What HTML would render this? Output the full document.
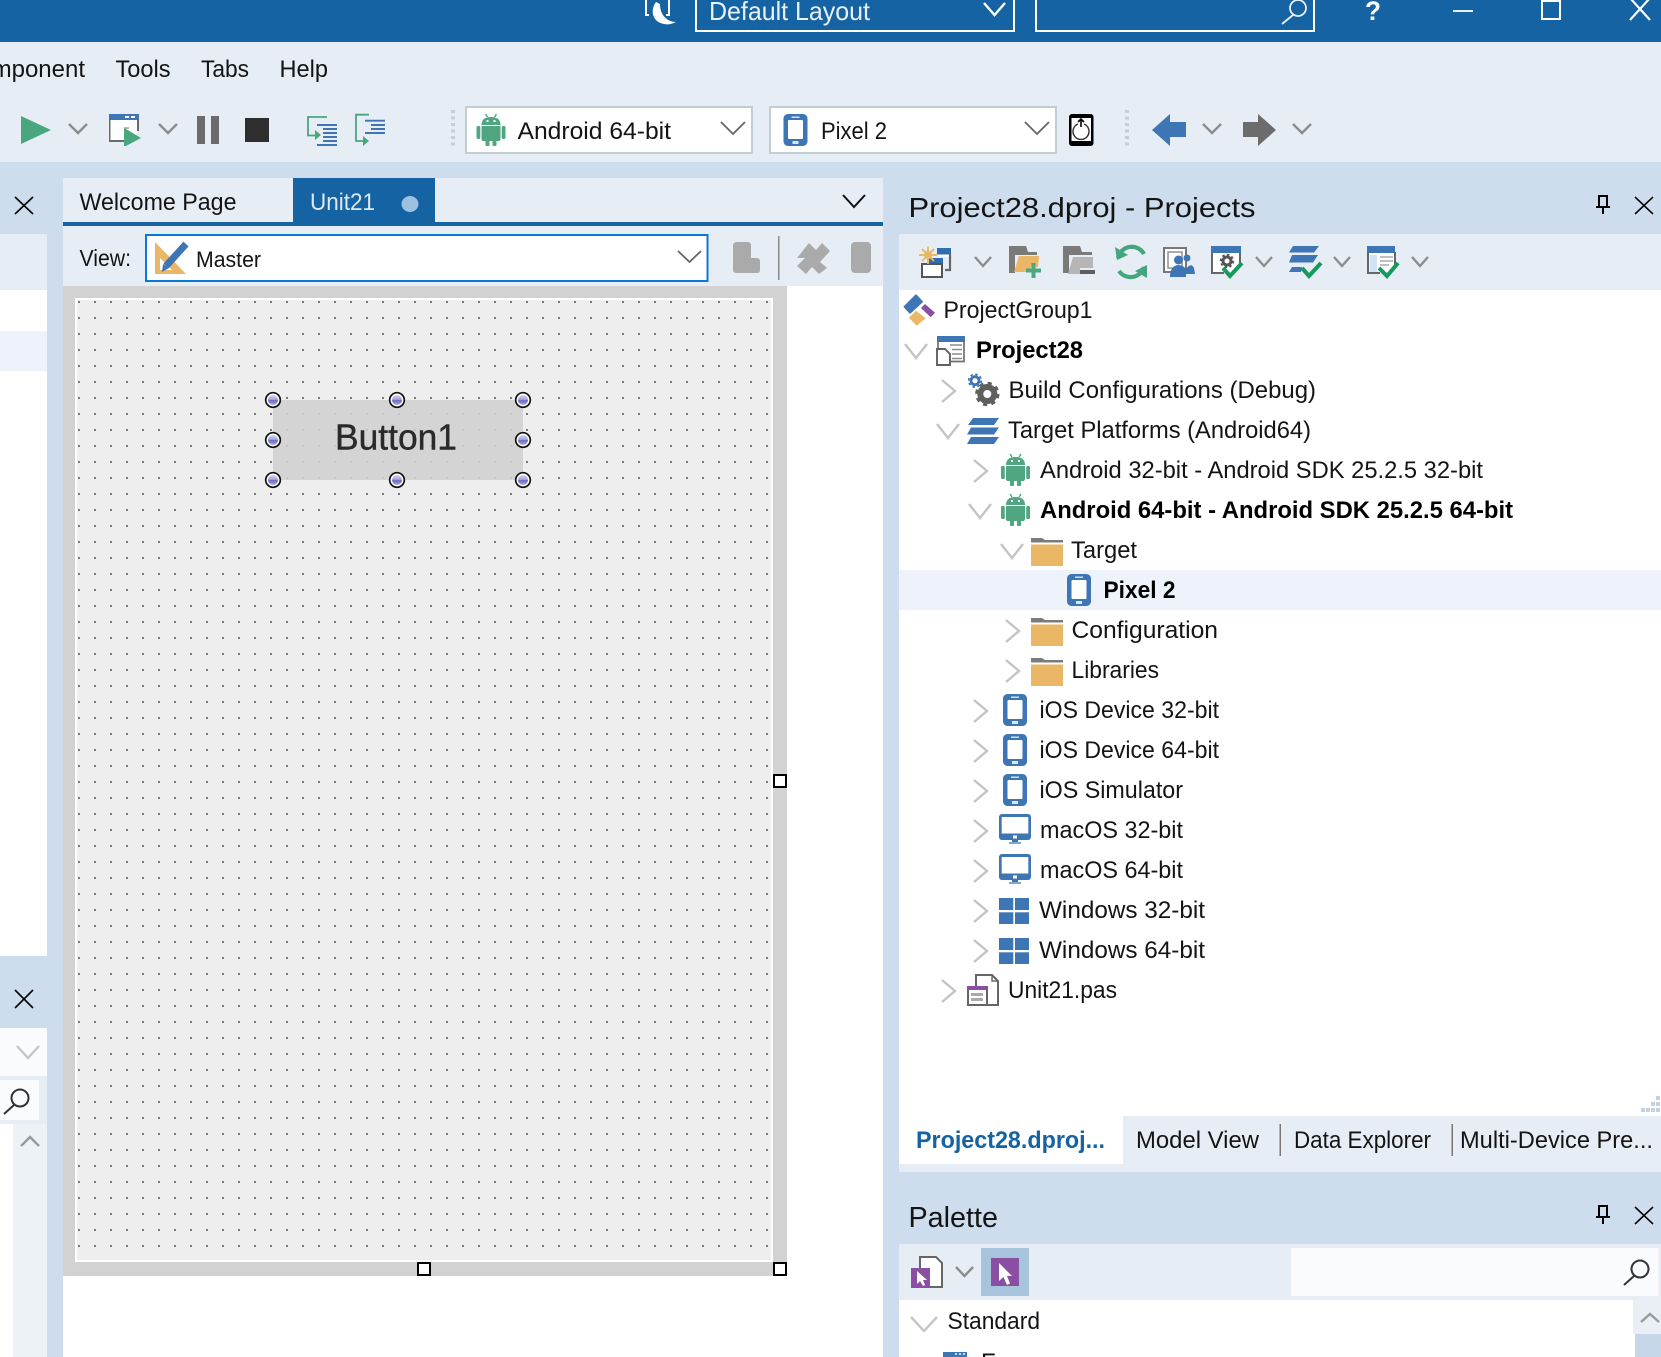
<!DOCTYPE html>
<html>
<head>
<meta charset="utf-8">
<title>Project28</title>
<style>
html,body{margin:0;padding:0;background:#fff;width:1661px;height:1357px;overflow:hidden}
svg{display:block}
text{font-family:"Liberation Sans",sans-serif;font-size:24px;fill:#141414;white-space:pre}
.b{font-weight:bold;fill:#000}
.c{fill:none;stroke:#c4c4c4;stroke-width:2.4}
.t{fill:none;stroke:#8c8c8c;stroke-width:2.4}
.k{fill:none;stroke:#149a5d;stroke-width:4}
.x{fill:none;stroke:#000;stroke-width:1.6}
</style>
</head>
<body>
<svg xmlns="http://www.w3.org/2000/svg" width="1661" height="1357" viewBox="0 0 1661 1357">
<defs>
<pattern id="dots" patternUnits="userSpaceOnUse" x="78" y="301" width="16" height="16"><rect width="2" height="2" fill="#777"/></pattern>
<linearGradient id="hg" x1="0" y1="0" x2="0" y2="1"><stop offset="0" stop-color="#d6d6ee"/><stop offset=".45" stop-color="#a4a4dc"/><stop offset=".55" stop-color="#6a6ac0"/><stop offset="1" stop-color="#a8a8d8"/></linearGradient>
<symbol id="android" viewBox="0 0 29 32" overflow="visible">
<path d="M5 11C5 5 9 3 14.500 3S24 5 24 11Z" fill="#4fa680"/>
<path d="M9 0l2 3M20 0l-2 3" stroke="#4fa680" stroke-width="1.400"/>
<rect x="10" y="6" width="2" height="2" fill="#fff"/><rect x="17" y="6" width="2" height="2" fill="#fff"/>
<path d="M5 12H24V25Q24 27 22 27H7Q5 27 5 25Z" fill="#4fa680"/>
<rect x="0" y="12" width="3.800" height="13" rx="1.500" fill="#4fa680"/><rect x="25.200" y="12" width="3.800" height="13" rx="1.500" fill="#4fa680"/>
<rect x="9" y="26" width="4" height="6" rx="1" fill="#4fa680"/><rect x="16" y="26" width="4" height="6" rx="1" fill="#4fa680"/>
</symbol>
<symbol id="phone" viewBox="0 0 24 32">
<rect width="24" height="32" rx="4.500" fill="#3e76b5"/>
<rect x="4.500" y="6" width="15" height="19" rx="1" fill="#fff"/>
<rect x="8" y="2.500" width="8" height="1.500" fill="#cfe0f0"/>
<rect x="9" y="27" width="6" height="3" fill="#dbe7f3"/>
</symbol>
<symbol id="mon" viewBox="0 0 32 32">
<rect width="32" height="26" rx="3" fill="#3e76b5"/>
<rect x="2.700" y="3" width="26.600" height="16.500" fill="#fff"/>
<rect x="14" y="21.500" width="4" height="3" fill="#fff"/>
<rect x="10" y="28" width="12" height="2" fill="#7fa6cf"/>
<rect x="13" y="26" width="6" height="2" fill="#3e76b5"/>
</symbol>
<symbol id="win" viewBox="0 0 30 26">
<rect width="14.300" height="12" fill="#3e76b5"/><rect x="16" width="14" height="12" fill="#3e76b5"/>
<rect y="14.300" width="14.300" height="11.700" fill="#3e76b5"/><rect x="16" y="14.300" width="14" height="11.700" fill="#3e76b5"/>
</symbol>
<symbol id="folder" viewBox="0 0 32 28">
<path d="M0 0H11L14 2H32V4.500H0Z" fill="#7c7c7c"/>
<rect y="6.500" width="32" height="21.500" fill="#e9b765"/>
</symbol>
</defs>

<!-- base -->
<rect width="1661" height="1357" fill="#cddded"/>
<rect width="1661" height="42" fill="#1563a2"/>
<rect y="42" width="1661" height="120" fill="#e6edf4"/>

<!-- title bar -->
<path d="M646 0V15H649M669 0V15H666" fill="none" stroke="#fff" stroke-width="2"/>
<path d="M656 2C650 10 652 22 664 24C668 25 672 24 676 22C668 22 660 16 660 4Z" fill="#fff"/>
<rect x="696" y="-4" width="318" height="35" fill="none" stroke="#fff" stroke-width="2"/>
<text x="709" y="20" style="font-size:26px;fill:#e8f0f8" textLength="161" lengthAdjust="spacingAndGlyphs">Default Layout</text>
<path d="M984 3L994.500 15L1005 3" fill="none" stroke="#fff" stroke-width="2.400"/>
<rect x="1036" y="-4" width="278" height="35" fill="none" stroke="#fff" stroke-width="2"/>
<circle cx="1298" cy="8" r="8" fill="none" stroke="#e8f0f8" stroke-width="1.800"/><path d="M1293 15L1282 24" stroke="#e8f0f8" stroke-width="1.800"/>
<text x="1365" y="20" class="b" style="font-size:27px;fill:#fff" textLength="16" lengthAdjust="spacingAndGlyphs">?</text>
<rect x="1453" y="10" width="20" height="2" fill="#e8f0f8"/>
<rect x="1542" y="1" width="18" height="18" fill="none" stroke="#fff" stroke-width="2"/>
<path d="M1630 -2L1650 20M1650 -2L1630 20" stroke="#fff" stroke-width="2.200"/>

<!-- menu -->
<text x="85" y="77" text-anchor="end">Component</text>
<text x="115.500" y="77" textLength="55" lengthAdjust="spacingAndGlyphs">Tools</text>
<text x="201" y="77" textLength="48" lengthAdjust="spacingAndGlyphs">Tabs</text>
<text x="279.500" y="77" textLength="48.500" lengthAdjust="spacingAndGlyphs">Help</text>

<!-- toolbar -->
<path d="M21 116L51 130L21 144Z" fill="#49a77f"/>
<path class="t" d="M69 124L78 133L87 124M159 124L168 133L177 124M1203 124L1212 133L1221 124M1293 124L1302 133L1311 124"/>
<path d="M110 120V141H125M138 120V131" fill="none" stroke="#6a6a6a" stroke-width="2"/>
<rect x="110.500" y="120" width="26.500" height="20" fill="#fff"/>
<rect x="109" y="114" width="30" height="6" fill="#3e76b5"/>
<rect x="125" y="116" width="4" height="2" fill="#fff"/><rect x="131" y="116" width="4" height="2" fill="#fff"/>
<path d="M124 128V146L126 146L141 138L126 129Z" fill="#49a77f"/>
<path d="M124 128H129" stroke="#999" stroke-width="1.400"/>
<rect x="197" y="116" width="8" height="28" fill="#6a6a6a"/><rect x="211" y="116" width="8" height="28" fill="#6a6a6a"/>
<rect x="245" y="118" width="24" height="24" fill="#2f2f2f"/>
<!-- step icons -->
<path d="M327 117H308V135.500H316" fill="none" stroke="#49a77f" stroke-width="1.800"/><path d="M315 130L321 135L315 140Z" fill="#49a77f"/>
<path d="M317 125H337M323 129H337M323 133H337M323 137H337M323 141H337M317 145H337" stroke="#3e76b5" stroke-width="1.900"/>
<path d="M369 114.700H356V141H364" fill="none" stroke="#49a77f" stroke-width="1.800"/><path d="M363 136L369 141L363 146Z" fill="#49a77f"/>
<path d="M365 120.700H385M371 125H385M371 129H385M365 133H385" stroke="#3e76b5" stroke-width="1.900"/>
<path d="M453 110V146" stroke="#c6ced6" stroke-width="4" stroke-dasharray="3 3.500"/>
<path d="M1127 110V146" stroke="#c6ced6" stroke-width="4" stroke-dasharray="3 3.500"/>
<!-- combos -->
<rect x="466" y="107" width="286" height="46" fill="#fff" stroke="#c0cdd5" stroke-width="2"/>
<use href="#android" x="476.500" y="114" width="29" height="32"/>
<text x="517.500" y="139" textLength="153.500" lengthAdjust="spacingAndGlyphs">Android 64-bit</text>
<path d="M721 122L733 134L745 122" fill="none" stroke="#666" stroke-width="1.800"/>
<rect x="770" y="107" width="286" height="46" fill="#fff" stroke="#c0cdd5" stroke-width="2"/>
<use href="#phone" x="783.500" y="114" width="24" height="32"/>
<text x="821" y="139" textLength="66" lengthAdjust="spacingAndGlyphs">Pixel 2</text>
<path d="M1025 122L1037 134L1049 122" fill="none" stroke="#666" stroke-width="1.800"/>
<rect x="1069" y="114" width="24.500" height="32" rx="3" fill="#000"/>
<rect x="1071.500" y="118" width="19.500" height="23" fill="#fff"/>
<path d="M1078 124A8 8 0 1 0 1084 124" fill="none" stroke="#333" stroke-width="1.400"/><path d="M1081 119V127M1078 122L1081 119L1084 122" fill="none" stroke="#000" stroke-width="1.600"/>
<path d="M1152 130L1170 114V122H1186V137H1170V146Z" fill="#3e76b5"/>
<path d="M1276 130L1258 114V122H1243V137H1258V146Z" fill="#6c6c6c"/>

<!-- left panel -->
<path class="x" d="M15 197L33 214M33 197L15 214"/>
<rect y="234" width="47" height="56" fill="#e6edf4"/>
<rect y="290" width="47" height="666" fill="#fff"/>
<rect y="331" width="47" height="40" fill="#eef3fb"/>
<path class="x" d="M15 990L33 1008M33 990L15 1008" stroke-width="2"/>
<rect y="1028" width="47" height="48" fill="#f9fbfd"/>
<path d="M17 1046L28 1058L39 1046" fill="none" stroke="#c6c6c6" stroke-width="2.400"/>
<rect y="1076" width="47" height="48" fill="#e6edf4"/>
<rect y="1080" width="39" height="40" fill="#f9fbfd"/>
<circle cx="20" cy="1098" r="8.500" fill="none" stroke="#333" stroke-width="2"/><path d="M14 1105L4 1114" stroke="#333" stroke-width="2"/>
<rect y="1124" width="13" height="233" fill="#fff"/>
<rect x="13" y="1124" width="34" height="233" fill="#edf2f7"/>
<path d="M21 1146L30 1137L39 1146" fill="none" stroke="#9a9a9a" stroke-width="2.400"/>

<!-- editor -->
<rect x="63" y="178" width="820" height="44" fill="#e6edf4"/>
<rect x="63" y="222" width="820" height="4" fill="#1563a2"/>
<rect x="63" y="226" width="820" height="60" fill="#e6edf4"/>
<rect x="63" y="286" width="820" height="1071" fill="#fff"/>
<text x="79.500" y="210" textLength="157" lengthAdjust="spacingAndGlyphs">Welcome Page</text>
<rect x="293" y="178" width="142" height="44" fill="#1563a2"/>
<text x="310" y="210" style="fill:#dce8f4" textLength="65" lengthAdjust="spacingAndGlyphs">Unit21</text>
<ellipse cx="410" cy="204" rx="8.500" ry="8" fill="#9dbfe0"/>
<path d="M843 195L854 207L865 195" fill="none" stroke="#111" stroke-width="2"/>
<text x="79.500" y="266" style="font-size:23px" textLength="51.500" lengthAdjust="spacingAndGlyphs">View:</text>
<rect x="146" y="235" width="561.500" height="46" fill="#fff" stroke="#0a78d7" stroke-width="2"/>
<path d="M155 242V274H186Z" fill="#e9b765"/><path d="M160 258V270H172Z" fill="#fff"/>
<path d="M186 244L166 266" stroke="#3e76b5" stroke-width="7"/><path d="M162 272L163 264L169 268Z" fill="#3e76b5"/>
<text x="196" y="267" style="font-size:22px" textLength="65" lengthAdjust="spacingAndGlyphs">Master</text>
<path d="M678 251L689.500 262L701 251" fill="none" stroke="#666" stroke-width="1.800"/>
<path d="M733 246Q733 242 737 242H748Q751 242 751 246V258H757Q760 258 760 262V270Q760 273 757 273H737Q733 273 733 270Z" fill="#aaa"/>
<rect x="778" y="236" width="1.500" height="44" fill="#8a8a8a"/>
<path d="M797 258L809 243L816 250L822 243L830 251L820 262L827 268L819 274L812 267L806 274L797 266L805 258Z" fill="#aaa"/>
<rect x="851" y="242" width="20" height="31" rx="4" fill="#aaa"/>

<!-- form designer -->
<rect x="63" y="286" width="724" height="990" fill="#d2d2d2"/>
<rect x="75" y="298" width="698" height="964" fill="#fff"/>
<rect x="77" y="300" width="694" height="960" fill="#eeeeee"/>
<rect x="77" y="300" width="694" height="960" fill="url(#dots)"/>
<rect x="273" y="400" width="250" height="80" fill="#cfcfcf" fill-opacity=".86"/>
<text x="335" y="449.500" style="font-size:36px;fill:#2a2a2a;stroke:#2a2a2a;stroke-width:.4" textLength="122" lengthAdjust="spacingAndGlyphs">Button1</text>
<g fill="#fff" stroke="#111" stroke-width="1.700">
<circle cx="273" cy="400" r="7.300"/><circle cx="397" cy="400" r="7.300"/><circle cx="523" cy="400" r="7.300"/>
<circle cx="273" cy="440" r="7.300"/><circle cx="523" cy="440" r="7.300"/>
<circle cx="273" cy="480" r="7.300"/><circle cx="397" cy="480" r="7.300"/><circle cx="523" cy="480" r="7.300"/>
</g>
<g fill="url(#hg)">
<circle cx="273" cy="400" r="5"/><circle cx="397" cy="400" r="5"/><circle cx="523" cy="400" r="5"/>
<circle cx="273" cy="440" r="5"/><circle cx="523" cy="440" r="5"/>
<circle cx="273" cy="480" r="5"/><circle cx="397" cy="480" r="5"/><circle cx="523" cy="480" r="5"/>
</g>
<g fill="#fff" stroke="#000" stroke-width="2">
<rect x="774" y="775" width="12" height="12"/>
<rect x="418" y="1263" width="12" height="12"/>
<rect x="774" y="1263" width="12" height="12"/>
</g>

<!-- projects panel -->
<text x="908.500" y="217" style="font-size:28px" textLength="347" lengthAdjust="spacingAndGlyphs">Project28.dproj - Projects</text>
<path d="M1599 196H1607V207H1599ZM1596 207H1610M1603 207V214" fill="none" stroke="#000" stroke-width="2"/>
<path class="x" d="M1635 197L1653 214M1653 197L1635 214"/>
<rect x="899" y="234" width="762" height="56" fill="#e6edf4"/>
<rect x="899" y="290" width="762" height="826" fill="#fff"/>
<rect x="899" y="570" width="762" height="40" fill="#eef3fb"/>

<!-- panel toolbar icons -->
<rect x="937" y="248" width="14" height="6.500" fill="#2f6db0"/>
<path d="M950 254V270H945" fill="none" stroke="#666" stroke-width="2.200"/>
<rect x="938" y="254.500" width="11" height="2" fill="#fff"/>
<rect x="929" y="258" width="14" height="5.500" fill="#2f6db0"/>
<rect x="922" y="264" width="20" height="13" fill="#fff" stroke="#555" stroke-width="2"/>
<circle cx="928" cy="255" r="4" fill="#e9b765"/><path d="M919 255H937M928 246.500V264M922 249L934 261M934 249L922 261" stroke="#e9b765" stroke-width="1.900"/>
<path class="t" d="M975 257L983 266L991 257M1256 257L1264 266L1272 257M1334 257L1342 266L1350 257M1412 257L1420 266L1428 257"/>
<!-- folder add -->
<path d="M1009 246H1026L1028 252H1037V255H1015V273H1009Z" fill="#7a7a7a"/>
<path d="M1019 256H1039L1038 267H1031V272H1014Z" fill="#e9b765"/>
<path d="M1033.500 263V278M1026 270.500H1041" stroke="#4aa980" stroke-width="4"/>
<!-- folder gray -->
<path d="M1063 246H1080L1082 252H1092V255H1069V273H1063Z" fill="#7a7a7a"/>
<path d="M1073 257H1093V268H1080V274H1068Z" fill="#b6b6b6"/>
<rect x="1080" y="270" width="15" height="4" fill="#5e5e5e"/>
<!-- refresh -->
<path d="M1118 258A14 14 0 0 1 1144 254" fill="none" stroke="#43a67c" stroke-width="4.200"/>
<path d="M1144 267A14 14 0 0 1 1119 271" fill="none" stroke="#43a67c" stroke-width="4.200"/>
<path d="M1115 247L1117 260L1128 255ZM1147 278V265L1135 271Z" fill="#43a67c"/>
<!-- project doc people -->
<rect x="1164" y="248" width="22" height="24" fill="#fff" stroke="#777" stroke-width="2"/>
<rect x="1168" y="252" width="14" height="16" fill="none" stroke="#888" stroke-width="1.400"/>
<circle cx="1178.500" cy="260" r="4.500" fill="#3e76b5"/><circle cx="1187" cy="258" r="3.500" fill="#3e76b5"/>
<path d="M1170 277Q1170 266 1178 265Q1183 265 1186 269Q1191 262 1194 268L1195 274H1186V277Z" fill="#3e76b5"/>
<!-- gear doc check -->
<path d="M1212 252V273H1224M1240 252V265" fill="none" stroke="#666" stroke-width="2"/>
<rect x="1213" y="253" width="26" height="19" fill="#fff"/>
<rect x="1211" y="246" width="30" height="7" fill="#3e76b5"/>
<circle cx="1227" cy="261" r="4" fill="none" stroke="#555" stroke-width="3"/>
<circle cx="1227" cy="261" r="6.300" fill="none" stroke="#555" stroke-width="1.800" stroke-dasharray="2.500 2.400"/>
<path class="k" d="M1223 268L1230 276L1242 263"/>
<!-- layers check -->
<g fill="#3e76b5"><path d="M1293 246H1319L1314 252.500H1289Z"/><path d="M1292 255H1318L1313 262.500H1289Z"/><path d="M1292 267H1302L1301 272H1289Z"/></g>
<path class="k" d="M1302 268L1309 276L1321 263"/>
<!-- doc check -->
<path d="M1368 252V273H1380M1395 252V266" fill="none" stroke="#666" stroke-width="2"/>
<rect x="1369" y="253" width="25" height="19" fill="#fff"/>
<rect x="1367" y="246" width="28" height="7" fill="#3e76b5"/>
<rect x="1369.500" y="255" width="7.500" height="17" fill="#cfe5f7"/>
<path d="M1380 257H1393M1380 261H1393M1380 265H1389" stroke="#aaa" stroke-width="1.500"/>
<path class="k" d="M1379 268L1387 276L1398 263"/>

<!-- tree: chevrons -->
<path class="c" d="M905 344L916 358L927 344M937 424L948 438L959 424M969 504L980 518L991 504M1001 544L1012 558L1023 544"/>
<path class="c" d="M942 380L955 391L942 402M974 460L987 471L974 482M1006 620L1019 631L1006 642M1006 660L1019 671L1006 682M974 700L987 711L974 722M974 740L987 751L974 762M974 780L987 791L974 802M974 820L987 831L974 842M974 860L987 871L974 882M974 900L987 911L974 922M974 940L987 951L974 962M942 980L955 991L942 1002"/>

<!-- tree: icons -->
<path d="M903.300 306.700L916 294L923.300 301.700L910 314Z" fill="#3e76b5"/>
<path d="M921 308L925 304L935 312.700L930.700 317.300Z" fill="#8a4fa3"/>
<path d="M909 317.700L916 310.700L925.700 318.300L916.700 325.700Z" fill="#e9b765"/>
<rect x="937" y="336" width="28" height="6" fill="#3e76b5"/>
<path d="M964 342V361.500H950M938 342V348" fill="none" stroke="#707070" stroke-width="1.700"/>
<path d="M950 345H962M952 349.500H962M952 354H962M952 358.500H962" stroke="#8c8c8c" stroke-width="1.500"/>
<path d="M937 349H945L950 354V365H937Z" fill="#fff" stroke="#606060" stroke-width="1.900"/>
<circle cx="987.300" cy="394" r="7" fill="none" stroke="#5f5f5f" stroke-width="6"/>
<circle cx="987.300" cy="394" r="10.800" fill="none" stroke="#5f5f5f" stroke-width="2.800" stroke-dasharray="4.200 4.280"/>
<circle cx="975" cy="380.700" r="4" fill="none" stroke="#3e76b5" stroke-width="2.800"/>
<circle cx="975" cy="380.700" r="6.300" fill="none" stroke="#3e76b5" stroke-width="1.800" stroke-dasharray="2.500 2.450"/>
<g fill="#3e76b5"><path d="M973 418H999L994 425H968Z"/><path d="M971 427.500H999L994 434.500H967Z"/><path d="M971 437H999L994 444H967Z"/></g>
<use href="#android" x="1001" y="454" width="29" height="32"/>
<use href="#android" x="1001" y="494" width="29" height="32"/>
<use href="#folder" x="1031" y="538" width="32" height="28"/>
<use href="#phone" x="1067" y="574" width="24" height="32"/>
<use href="#folder" x="1031" y="618" width="32" height="28"/>
<use href="#folder" x="1031" y="658" width="32" height="28"/>
<use href="#phone" x="1003" y="694" width="24" height="32"/>
<use href="#phone" x="1003" y="734" width="24" height="32"/>
<use href="#phone" x="1003" y="774" width="24" height="32"/>
<use href="#mon" x="999" y="814" width="32" height="32"/>
<use href="#mon" x="999" y="854" width="32" height="32"/>
<use href="#win" x="999" y="898" width="30" height="26"/>
<use href="#win" x="999" y="938" width="30" height="26"/>
<path d="M976 986V975H992L998 981V1005H988" fill="#fff" stroke="#666" stroke-width="2"/><path d="M992 975V981H998" fill="none" stroke="#666" stroke-width="1.400"/>
<rect x="968" y="987" width="19" height="18" fill="#fff" stroke="#666" stroke-width="2"/>
<rect x="967" y="986" width="20" height="4" fill="#8a4fa3"/>
<rect x="971" y="993" width="12" height="3" fill="#aaa"/><rect x="971" y="998" width="12" height="3" fill="#aaa"/>

<!-- tree: labels -->
<text x="943.500" y="318" textLength="149" lengthAdjust="spacingAndGlyphs">ProjectGroup1</text>
<text x="976" y="358" class="b" textLength="107" lengthAdjust="spacingAndGlyphs">Project28</text>
<text x="1008.500" y="398" textLength="307.500" lengthAdjust="spacingAndGlyphs">Build Configurations (Debug)</text>
<text x="1008" y="438" textLength="303" lengthAdjust="spacingAndGlyphs">Target Platforms (Android64)</text>
<text x="1040" y="478" textLength="443" lengthAdjust="spacingAndGlyphs">Android 32-bit - Android SDK 25.2.5 32-bit</text>
<text x="1040" y="518" class="b" textLength="473" lengthAdjust="spacingAndGlyphs">Android 64-bit - Android SDK 25.2.5 64-bit</text>
<text x="1071" y="558" textLength="66" lengthAdjust="spacingAndGlyphs">Target</text>
<text x="1103.500" y="598" class="b" textLength="72" lengthAdjust="spacingAndGlyphs">Pixel 2</text>
<text x="1071.500" y="638" textLength="146.500" lengthAdjust="spacingAndGlyphs">Configuration</text>
<text x="1071.500" y="678" textLength="87.500" lengthAdjust="spacingAndGlyphs">Libraries</text>
<text x="1039.500" y="718" textLength="179.500" lengthAdjust="spacingAndGlyphs">iOS Device 32-bit</text>
<text x="1039.500" y="758" textLength="179.500" lengthAdjust="spacingAndGlyphs">iOS Device 64-bit</text>
<text x="1039.500" y="798" textLength="143.500" lengthAdjust="spacingAndGlyphs">iOS Simulator</text>
<text x="1040" y="838" textLength="143" lengthAdjust="spacingAndGlyphs">macOS 32-bit</text>
<text x="1040" y="878" textLength="143" lengthAdjust="spacingAndGlyphs">macOS 64-bit</text>
<text x="1039" y="918" textLength="166" lengthAdjust="spacingAndGlyphs">Windows 32-bit</text>
<text x="1039" y="958" textLength="166" lengthAdjust="spacingAndGlyphs">Windows 64-bit</text>
<text x="1008" y="998" textLength="109" lengthAdjust="spacingAndGlyphs">Unit21.pas</text>

<!-- size grip -->
<g fill="#c8d2dc"><rect x="1656" y="1096" width="4" height="4"/><rect x="1651" y="1102" width="4" height="4"/><rect x="1656" y="1102" width="4" height="4"/><rect x="1641" y="1108" width="4" height="4"/><rect x="1646" y="1108" width="4" height="4"/><rect x="1651" y="1108" width="4" height="4"/><rect x="1656" y="1108" width="4" height="4"/></g>

<!-- bottom tabs -->
<rect x="899" y="1116" width="762" height="56" fill="#e6edf4"/>
<rect x="899" y="1116" width="224" height="48" fill="#fff"/>
<text x="916" y="1148" class="b" style="fill:#1563a2" textLength="189" lengthAdjust="spacingAndGlyphs">Project28.dproj...</text>
<text x="1136" y="1148" textLength="123" lengthAdjust="spacingAndGlyphs">Model View</text>
<rect x="1279.500" y="1124" width="1.500" height="32" fill="#777"/>
<text x="1294" y="1148" textLength="137" lengthAdjust="spacingAndGlyphs">Data Explorer</text>
<rect x="1451.500" y="1124" width="1.500" height="32" fill="#777"/>
<text x="1460" y="1148" textLength="193" lengthAdjust="spacingAndGlyphs">Multi-Device Pre...</text>

<!-- palette -->
<text x="908.500" y="1227" style="font-size:29px" textLength="89.500" lengthAdjust="spacingAndGlyphs">Palette</text>
<path d="M1599 1206H1607V1217H1599ZM1596 1217H1610M1603 1217V1224" fill="none" stroke="#000" stroke-width="2"/>
<path class="x" d="M1635 1207L1653 1224M1653 1207L1635 1224"/>
<rect x="899" y="1244" width="762" height="56" fill="#e6edf4"/>
<path d="M920 1268V1257H936L942 1263V1287H930" fill="#fff" stroke="#666" stroke-width="2"/>
<rect x="911" y="1268" width="19" height="20" fill="#8a4fa3"/>
<path d="M917 1271L917 1284L920 1281L923 1286L925 1285L923 1280L927 1280Z" fill="#fff"/>
<path class="t" d="M956 1267L964.500 1276L973 1267"/>
<rect x="981" y="1248" width="48" height="48" fill="#a7c4dc"/>
<rect x="991" y="1258" width="28" height="28" fill="#8a4fa3"/>
<path d="M999 1263L999 1281L1003.500 1277L1007 1285L1010 1283.500L1007 1276L1012 1276Z" fill="#fff"/>
<rect x="1291" y="1248" width="367.500" height="48" fill="#f9fbfd"/>
<circle cx="1640" cy="1269" r="8.500" fill="none" stroke="#333" stroke-width="2"/><path d="M1634 1276L1624 1285" stroke="#333" stroke-width="2"/>
<rect x="899" y="1300" width="762" height="57" fill="#fff"/>
<rect x="1633" y="1300" width="28" height="34" fill="#e9eff5"/>
<rect x="1635" y="1334" width="26" height="23" fill="#c5d7e8"/>
<path d="M1641 1322L1650 1314L1659 1322" fill="none" stroke="#9a9a9a" stroke-width="2.400"/>
<path d="M911 1317L924 1331L937 1317" fill="none" stroke="#c6c6c6" stroke-width="2.400"/>
<text x="947.500" y="1329" textLength="92.500" lengthAdjust="spacingAndGlyphs">Standard</text>
<rect x="943" y="1352" width="24" height="8" fill="#3e76b5"/>
<path d="M955 1354H957M959 1354H961M963 1354H965" stroke="#fff" stroke-width="1.500"/>
<text x="981" y="1370">F</text>
</svg>
</body>
</html>
